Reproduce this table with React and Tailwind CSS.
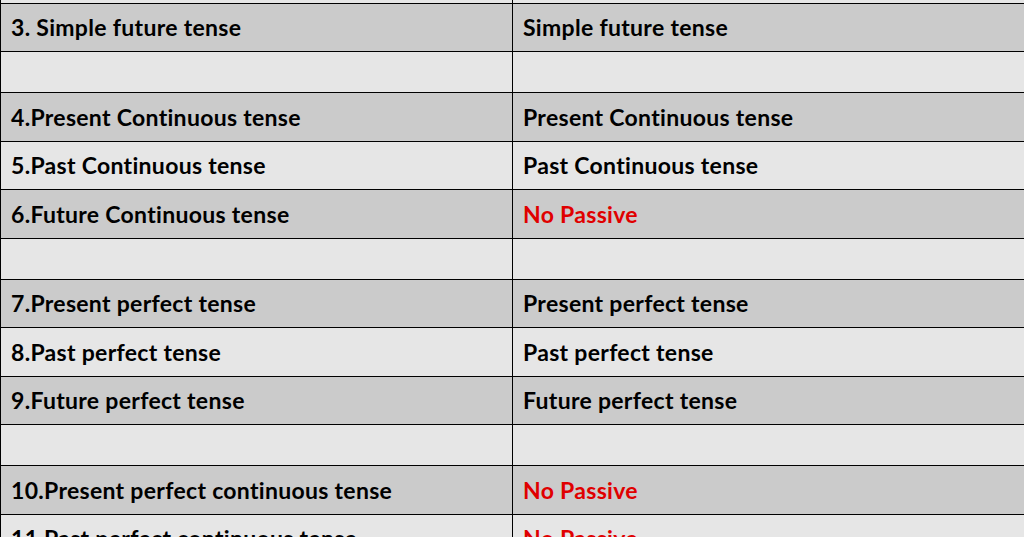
const rows = [
  { l: '', r: '', h: 'h-[4px]', bg: 'bg-[#e6e6e6]' },
  { l: '3. Simple future tense', r: 'Simple future tense', h: 'h-[48px]', bg: 'bg-[#cbcbcb]' },
  { l: '', r: '', h: 'h-[41px]', bg: 'bg-[#e6e6e6]' },
  { l: '4.Present Continuous tense', r: 'Present Continuous tense', h: 'h-[49px]', bg: 'bg-[#cbcbcb]' },
  { l: '5.Past Continuous tense', r: 'Past Continuous tense', h: 'h-[48px]', bg: 'bg-[#e6e6e6]' },
  { l: '6.Future Continuous tense', r: 'No Passive', red: true, h: 'h-[49px]', bg: 'bg-[#cbcbcb]' },
  { l: '', r: '', h: 'h-[41px]', bg: 'bg-[#e6e6e6]' },
  { l: '7.Present perfect tense', r: 'Present perfect tense', h: 'h-[48px]', bg: 'bg-[#cbcbcb]' },
  { l: '8.Past perfect tense', r: 'Past perfect tense', h: 'h-[49px]', bg: 'bg-[#e6e6e6]' },
  { l: '9.Future perfect tense', r: 'Future perfect tense', h: 'h-[48px]', bg: 'bg-[#cbcbcb]' },
  { l: '', r: '', h: 'h-[41px]', bg: 'bg-[#e6e6e6]' },
  { l: '10.Present perfect continuous tense', r: 'No Passive', red: true, h: 'h-[49px]', bg: 'bg-[#cbcbcb]' },
  { l: '11.Past perfect continuous tense', r: 'No Passive', red: true, h: 'h-[48px]', bg: 'bg-[#e6e6e6]' },
]

export default function App() {
  return (
    <div
      className="w-[1024px] h-[537px] overflow-hidden bg-[#e6e6e6] font-bold text-[23px] tracking-[0.3px] text-black"
      style={{ fontFamily: 'Lato, "Open Sans", sans-serif' }}
    >
      {rows.map((row, i) => (
        <div key={i} className={`grid grid-cols-[513px_1fr] border-b border-black ${row.h} ${row.bg}`}>
          <div className="border-l border-r border-black flex items-center pl-[10px] whitespace-nowrap">
            {row.l}
          </div>
          <div className={`flex items-center pl-[10px] whitespace-nowrap ${row.red ? 'text-[#e00000]' : ''}`}>
            {row.r}
          </div>
        </div>
      ))}
    </div>
  )
}
